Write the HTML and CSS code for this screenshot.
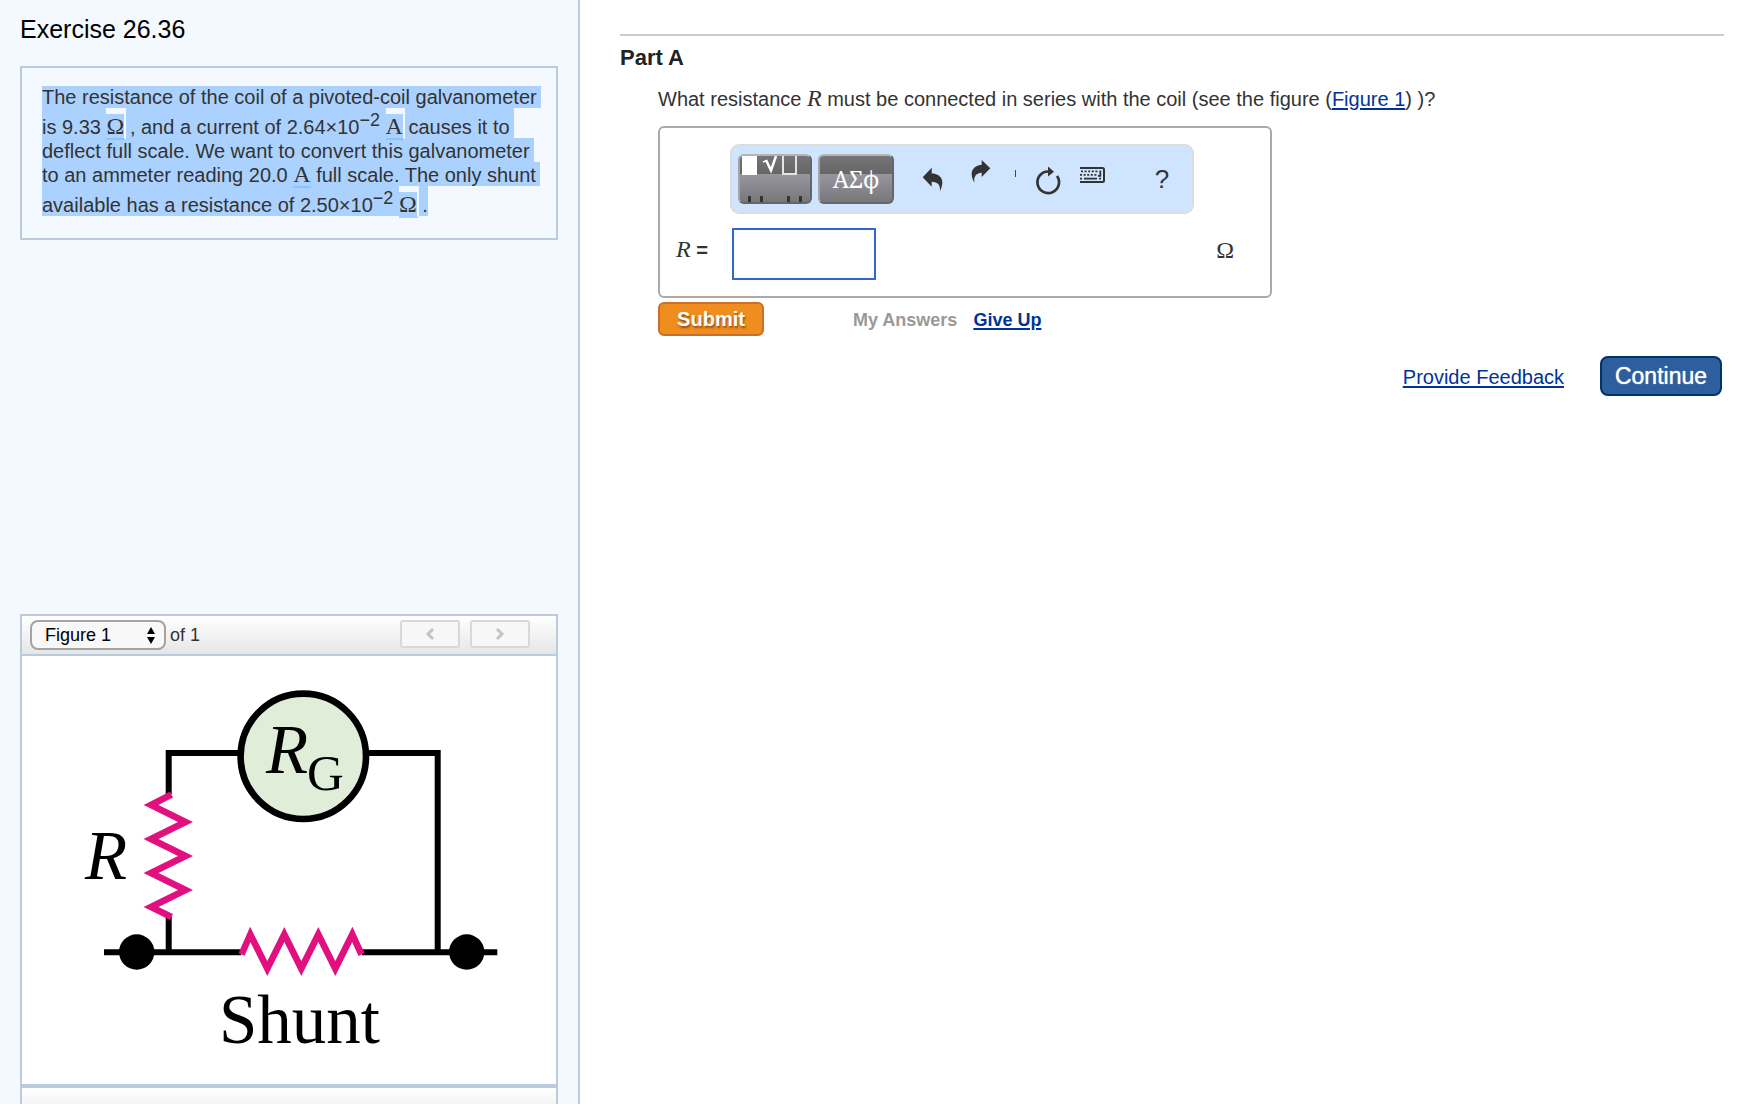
FILE: index.html
```html
<!DOCTYPE html>
<html lang="en">
<head>
<meta charset="utf-8">
<title>Exercise 26.36</title>
<link rel="stylesheet" href="styles.css">
</head>
<body>
<div class="page">
  <aside class="side">
    <h1 class="title">Exercise 26.36</h1>
    <p class="problem">
      <span class="line first">The resistance of the coil of a pivoted-coil galvanometer</span>
      <span class="line tall">is 9.33 <span class="unit boxed">Ω</span> , and a current of 2.64×10<sup>−2</sup> <span class="unit boxed">A</span> causes it to</span>
      <span class="line">deflect full scale. We want to convert this galvanometer</span>
      <span class="line">to an ammeter reading 20.0 <span class="unit lined">A</span> full scale. The only shunt</span>
      <span class="line tall last">available has a resistance of 2.50×10<sup>−2</sup> <span class="unit boxed plain">Ω</span> .</span>
    </p>

    <section class="figures">
      <div class="figure-bar">
        <div class="picker">
          <select id="figure" class="picker-select" aria-label="Figure"><option>Figure 1</option></select>
          <svg class="picker-arrows" width="8" height="18" viewBox="0 0 8 18"><path d="M4 0 8 7H0zM4 17 0 10H8z"/></svg>
        </div>
        <label for="figure" class="count">of 1</label>
        <button class="step prev" aria-label="Previous figure"><svg width="10" height="14" viewBox="0 0 10 14"><path d="M8 2 3 7l5 5"/></svg></button>
        <button class="step" aria-label="Next figure"><svg width="10" height="14" viewBox="0 0 10 14"><path d="M2 2l5 5-5 5"/></svg></button>
      </div>
      <div class="figure-body">
        <svg class="circuit" viewBox="0 0 534 428">
          <g fill="none" stroke="#000" stroke-width="6">
            <path d="M82 296.300H219M340 296.300H475.300"/>
            <path d="M146.700 296V260M146.700 138V97H218M344 97H415.700V296"/>
            <circle cx="281.300" cy="100.300" r="62.700" stroke-width="6.600" fill="#e0edd8"/>
          </g>
          <g fill="none" stroke="#e2107e" stroke-width="6.600" stroke-miterlimit="10">
            <path d="M149.500 138.500 129 149 163.500 166 129 183 163.500 200 129 217 163.500 234 129 251 149.500 261"/>
            <path d="M219.500 298.500 228.300 278.500 245.300 312.500 262.300 278.500 279.300 312.500 296.300 278.500 313.300 312.500 330.300 278.500 339.500 298.500"/>
          </g>
          <circle cx="114.700" cy="296" r="17.700"/>
          <circle cx="444.700" cy="296" r="17.700"/>
          <g class="circuit-text">
            <text class="var" x="63" y="223">R</text>
            <text class="var" x="244" y="117">R</text>
            <text class="sub" x="285" y="134">G</text>
            <text x="197" y="387">Shunt</text>
          </g>
        </svg>
      </div>
      <div class="next-bar"></div>
    </section>
  </aside>

  <main class="main">
    <h2 class="part">Part A</h2>
    <div class="content">
      <p class="question">What resistance <i class="math">R</i> must be connected in series with the coil (see the figure (<a href="#figure">Figure 1</a>) )?</p>
      <form class="answer" id="answer-form">
        <div class="toolbar">
          <button type="button" class="key templates" aria-label="Templates">
            <svg width="70" height="46" viewBox="0 0 70 46">
              <path fill="#fff" d="M2 0h15v19H2z"/>
              <path fill="none" stroke="#fff" stroke-width="1.500" d="M23 6l4-1.500"/>
              <path fill="none" stroke="#fff" stroke-width="2.500" d="M26 4l5 10.500L36 0"/>
              <path fill="none" stroke="#e4e4e4" stroke-width="2" d="M43 0v18h13V0"/>
              <path fill="#333" d="M8 40h3v6H8zM20 40h3v6h-3zM47 40h3v6h-3zM59 40h3v6h-3z"/>
            </svg>
          </button>
          <button type="button" class="key greek">ΑΣϕ</button>
          <button type="button" class="icon undo" aria-label="Undo"><svg width="40" height="50" viewBox="0 0 40 50"><path d="M9.700 23.300 18.700 13.700V19.300C27 20 33 25.500 27 37.300 27.500 31 25 28 18.700 27.700V32.700z"/></svg></button>
          <button type="button" class="icon redo" aria-label="Redo"><svg width="40" height="50" viewBox="0 0 40 50"><path d="M30.300 14.300 21.700 6V10.700C14 11.500 8 17 14.500 28.700 13.500 23 15.500 19 21.700 18.700V23z"/></svg></button>
          <svg class="tick" width="28" height="50" viewBox="0 0 28 50"><path fill="none" stroke="#445" d="M15.500 16v7"/></svg>
          <button type="button" class="icon" aria-label="Reset"><svg width="40" height="50" viewBox="0 0 40 50"><path fill="none" stroke="#333" stroke-width="2.700" d="M29 22A10.800 10.800 0 1 1 20.300 17.500"/><path d="M20 12.500 26 17.800 20 22.500z"/></svg></button>
          <button type="button" class="icon keyboard" aria-label="Keyboard"><svg width="40" height="50" viewBox="0 0 40 50"><path fill="none" stroke="#333" stroke-width="2" d="M8 14H30.500Q32 14 32 15.500V26.500Q32 28 30.500 28H8"/><path fill="none" stroke="#333" stroke-width="1.800" stroke-dasharray="2 1.600" d="M9 17.300H26M8 20.900H26"/><path fill="none" stroke="#333" stroke-width="1.800" d="M8 24.600h2M12 24.600h13M27 24.600h2M28.300 16.500V21.800H26"/></svg></button>
          <button type="button" class="icon help" aria-label="Help">?</button>
        </div>
        <div class="entry">
          <label for="value"><i class="math">R</i> <b>=</b></label>
          <input id="value" class="value" type="text">
          <span class="ohm">Ω</span>
        </div>
      </form>
      <div class="actions">
        <button type="submit" form="answer-form" class="submit">Submit</button>
        <span class="mine">My Answers</span>
        <a class="give-up" href="#give-up">Give Up</a>
      </div>
    </div>
    <div class="footer">
      <a href="#feedback">Provide Feedback</a>
      <button class="continue">Continue</button>
    </div>
  </main>
</div>
</body>
</html>
```
FILE: styles.css
```css
* { box-sizing: border-box; }
body {
  margin: 0;
  background: #fff;
  color: #333;
  font: 20px/22px "Liberation Sans", Arial, sans-serif;
}
h1, h2, p { margin: 0; }
button, input, select { font: inherit; color: inherit; margin: 0; padding: 0; }
a { color: #039; text-decoration-thickness: 2px; text-underline-offset: 2px; }
svg { display: block; }

.page { display: flex; min-height: 100vh; }

/* Left panel */
.side {
  display: flex;
  flex-direction: column;
  flex: 0 0 580px;
  min-width: 0;
  padding: 14px 20px 0;
  background: #f4f8ff;
  border-right: 2px solid #b9cbdd;
}
.title { color: #000; font-size: 25px; font-weight: 400; line-height: 30px; }
.problem {
  margin-top: 22px;
  padding: 18px 10px 22px 20px;
  border: 2px solid #b9cbdd;
}
.line {
  display: block;
  width: fit-content;
  padding: 2px 4px 0 0;
  background: #abd2ff;
  white-space: nowrap;
}
.line.first { padding-top: 0; }
.line.tall { padding-top: 8px; }
.line.last { padding-right: 0; }
sup { font-size: 18px; line-height: 0; vertical-align: 8px; }
.unit {
  display: inline-block;
  position: relative;
  font-family: "Liberation Serif", "Times New Roman", serif;
  font-size: 24px;
  line-height: 20px;
}
.boxed::before {
  content: "";
  position: absolute;
  inset: -8px -2px -4px 0;
  border-top: 6px solid #f4f8ff;
  border-right: 2px solid #f4f8ff;
  border-bottom: 2px solid #8dc2ff;
}
.boxed.plain::before { border-bottom-color: #abd2ff; }
.lined::before {
  content: "";
  position: absolute;
  inset: auto 0 -4px 0;
  height: 2px;
  background: #8dc2ff;
}

/* Figure viewer */
.figures { margin-top: auto; border: 2px solid #b9cbdd; border-bottom: 0; }
.figure-bar {
  display: flex;
  align-items: flex-start;
  height: 40px;
  padding: 4px 26px 0 8px;
  border-bottom: 2px solid #b9cbdd;
  background: linear-gradient(#fff, #e6e6e6);
  font-size: 18px;
}
.picker { position: relative; }
.picker-select {
  display: block;
  width: 136px;
  height: 30px;
  padding-left: 13px;
  appearance: none;
  border: 2px solid #a3a3a3;
  border-radius: 8px;
  background: #f8f8f8;
  color: #000;
}
.picker-arrows { position: absolute; right: 11px; top: 7px; pointer-events: none; }
.count { margin-left: 4px; line-height: 30px; }
.step {
  display: grid;
  place-items: center;
  width: 60px;
  height: 28px;
  border: 2px solid #d8d8d8;
  border-radius: 3px;
  background: #f7f7f7;
}
.step.prev { margin: 0 10px 0 auto; }
.step path { fill: none; stroke: #c4c4c4; stroke-width: 3; }
.figure-body { background: #fff; border-bottom: 4px solid #b9cbdd; }
.circuit { width: 100%; }
.circuit-text { font-family: "Liberation Serif", "Times New Roman", serif; font-size: 69px; }
.var { font-style: italic; }
.sub { font-size: 51px; }
.next-bar { height: 16px; background: linear-gradient(#fff, #f4f4f4); }

/* Right panel */
.main { flex: 1; min-width: 0; padding: 34px 34px 0 40px; }
.part {
  padding-top: 10px;
  border-top: 2px solid #ccc;
  color: #222;
  font-size: 22px;
  line-height: 24px;
}
.content { margin-left: 38px; }
.question { margin-top: 14px; line-height: 30px; white-space: nowrap; }
.math {
  font-family: "Liberation Serif", "Times New Roman", serif;
  font-size: 24px;
  line-height: 20px;
}
.answer {
  width: 614px;
  height: 172px;
  margin-top: 12px;
  padding: 16px 16px 0;
  border: 2px solid #aaa;
  border-radius: 6px;
}
.toolbar {
  display: flex;
  width: 464px;
  height: 70px;
  margin-left: 54px;
  padding: 8px 6px;
  border: 2px solid #ddd;
  border-radius: 9px;
  background: #cfe5ff;
}
.key {
  height: 50px;
  border: 2px solid;
  border-color: #b4b4b4 #666 #666 #a4a4a4;
  border-radius: 6px;
  background: linear-gradient(#757575, #666 18px, #97969f 18px, #77777b);
  color: #fff;
}
.templates { width: 74px; margin-right: 6px; }
.greek { width: 76px; font-family: "Noto Serif", "DejaVu Serif", serif; font-size: 23px; }
.icon { width: 40px; height: 50px; border: 0; background: none; fill: #333; }
.undo { margin-left: 19px; }
.redo { margin-left: 7px; }
.keyboard { margin-left: 4px; }
.help { margin-left: 30px; font-size: 26px; }
.entry { display: flex; align-items: flex-start; margin-top: 14px; }
.entry label { width: 56px; line-height: 44px; white-space: nowrap; }
.value { width: 144px; height: 52px; padding: 0 8px; border: 2px solid #36c; background: #fff; }
.ohm {
  margin: 0 20px 0 auto;
  font-family: "Liberation Serif", "Times New Roman", serif;
  font-size: 24px;
  line-height: 44px;
}
.actions { display: flex; align-items: center; margin-top: 4px; font-size: 18px; font-weight: 700; }
.submit {
  width: 106px;
  height: 34px;
  border: 2px solid #c96f2c;
  border-radius: 6px;
  background: #ef8d1f;
  color: #fff;
  font-size: 20px;
  text-shadow: 1px 2px 2px #a04c10;
}
.mine { margin: 0 16px 0 89px; color: #999; }
.mine, .give-up { line-height: 24px; padding-top: 2px; }
.footer { display: flex; justify-content: flex-end; align-items: center; gap: 36px; margin: 20px 2px 0 0; }
.footer a { padding-top: 2px; }
.continue {
  width: 122px;
  height: 40px;
  border: 2px solid #036;
  border-radius: 8px;
  background: #2d5f9e;
  color: #fff;
  font-size: 23px;
  text-shadow: 0 0 1px #fff;
}
```
